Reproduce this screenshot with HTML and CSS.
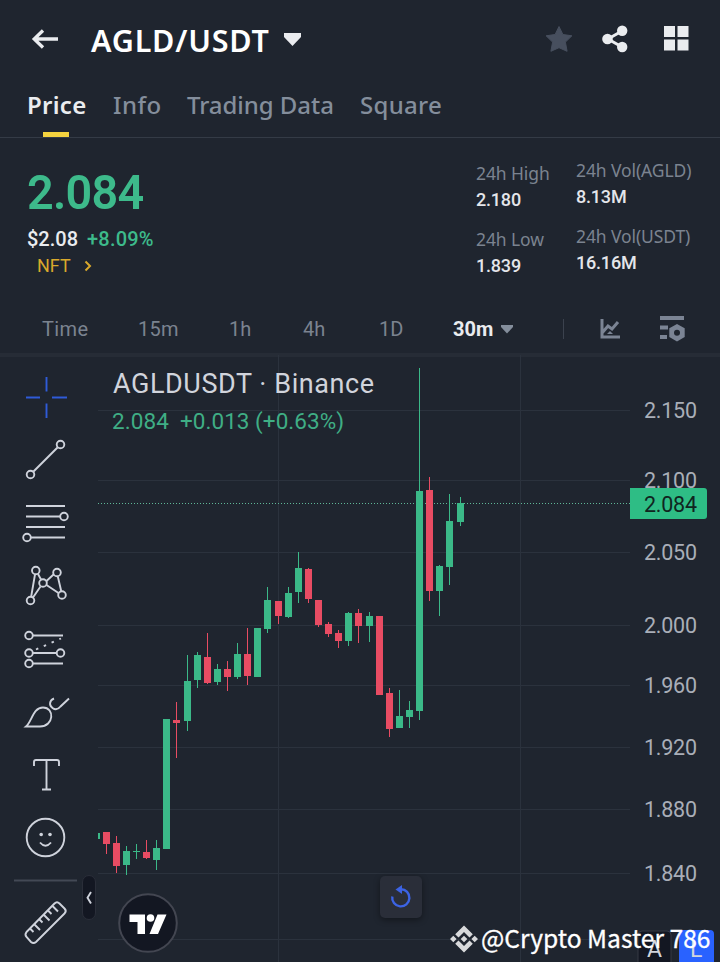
FILE: index.html
```html
<!DOCTYPE html>
<html lang="en">
<head>
<meta charset="utf-8">
<title>AGLD/USDT</title>
<link rel="stylesheet" href="styles.css">
</head>
<body>
<div class="app">
  <header class="header">
    <svg class="back" width="28" height="22" viewBox="0 0 28 22"><path d="M27 11H3M12 2.500L3.200 11l8.800 8.500" fill="none" stroke="#eaecef" stroke-width="3.300"/></svg>
    <h1 class="pair">AGLD/USDT</h1>
    <svg class="pair-caret" width="17" height="14" viewBox="0 0 17 14"><path d="M0 0h17v4L8.500 13 0 4z" fill="#eaecef"/></svg>
    <div class="actions">
      <svg width="28" height="28" viewBox="0 0 28 28"><path d="M14 1.500l3.900 8 9 1.300-6.500 6.300 1.700 9.200-8.100-3.600-8.100 3.600 1.700-9.200L1.100 10.800l9-1.300z" fill="#474f5e" stroke="#474f5e" stroke-linejoin="round"/></svg>
      <svg width="28" height="28" viewBox="0 0 28 28"><path d="M21 6L7 14l14 8" fill="none" stroke="#eaecef" stroke-width="3"/><g fill="#eaecef"><circle cx="21.200" cy="5.800" r="5.200"/><circle cx="6.500" cy="14" r="5.300"/><circle cx="21.200" cy="22" r="5.200"/></g></svg>
      <svg width="25" height="25" viewBox="0 0 25 25"><path d="M0 0h11v11H0zM13.500 0h11v11h-11zM0 13.500h11v11H0zM13.500 13.500h11v11h-11z" fill="#eaecef"/></svg>
    </div>
  </header>
  <nav class="tabs">
    <a class="tab tab-active">Price</a><a class="tab tab-info">Info</a><a class="tab tab-data">Trading Data</a><a class="tab tab-square">Square</a>
  </nav>
  <section class="summary">
    <div class="quote">
      <div class="last">2.084</div>
      <div class="change"><span class="fiat">$2.08</span><span class="pct">+8.09%</span></div>
      <div class="tag"><span>NFT</span><svg width="8" height="12" viewBox="0 0 8 12"><path d="M1.500 1.500L6 6l-4.500 4.500" fill="none" stroke="#d9a92c" stroke-width="2"/></svg></div>
    </div>
    <dl class="stats stats-range">
      <dt>24h High</dt><dd>2.180</dd>
      <dt>24h Low</dt><dd>1.839</dd>
    </dl>
    <dl class="stats stats-volume">
      <dt>24h Vol(AGLD)</dt><dd>8.13M</dd>
      <dt>24h Vol(USDT)</dt><dd>16.16M</dd>
    </dl>
  </section>
  <div class="intervals">
    <span class="iv iv-time">Time</span><span class="iv iv-15">15m</span><span class="iv iv-1h">1h</span><span class="iv iv-4h">4h</span><span class="iv iv-1d">1D</span><span class="iv iv-active">30m</span>
    <svg class="iv-caret" width="12" height="9" viewBox="0 0 12 9"><path d="M0 0h12v2L6 8.500 0 2z" fill="#848e9c"/></svg>
    <i class="iv-sep"></i>
    <svg class="iv-chart" width="20" height="20" viewBox="0 0 20 20"><path d="M2 0v18h18M2 14L8 7l4 3 6-7" fill="none" stroke="#7b8494" stroke-width="3"/><path d="M10 12l3 3H7z" fill="#7b8494"/></svg>
    <svg class="iv-set" width="26" height="26" viewBox="0 0 26 26"><g fill="#7b8494"><path d="M0 0h24v4H0zM0 9.500h8v4H0zM0 19h7v4H0z"/><path fill-rule="evenodd" d="M17 8l7.700 4.300v8.700L17 25.500 9.300 21v-8.700zM17 13.700a3 3 0 1 0 0 6 3 3 0 0 0 0-6z"/></g></svg>
  </div>
  <main class="workspace">
    <aside class="tools">
      <svg viewBox="0 355 98 607" width="98" height="607" fill="none" stroke="#cfd3dc" stroke-width="1.900">
        <path d="M46.500 377v14.500M46.500 403.500V418M26 397.500h14M52 397.500h15" stroke="#2f5bd8"/>
        <path d="M33.500 471.500l24-24"/><circle cx="30.500" cy="474.500" r="3.800"/><circle cx="60.500" cy="444.500" r="3.800"/>
        <path d="M26 506h39M26 516.500h34M26 527h39M31 537.500h34"/><circle cx="64" cy="516.500" r="3.800"/><circle cx="27" cy="537.500" r="3.800"/>
        <path d="M31.200 596.500L35 574.500M33 597.500l7.500-11M46.500 581l7-6.500M57.800 576.500l3.400 14.500M46.500 585l12 8M38 574l3 5.500"/><circle cx="35.800" cy="570.500" r="3.800"/><circle cx="57" cy="572.500" r="3.800"/><circle cx="43" cy="583" r="3.800"/><circle cx="30.500" cy="600.500" r="3.800"/><circle cx="62" cy="595" r="3.800"/>
        <path d="M33 635.500h30M33 653h23M33 663.500h30"/><path d="M36 649.500l25-11" stroke-dasharray="2.500 6"/><circle cx="29" cy="635.500" r="3.800"/><circle cx="29" cy="653" r="3.800"/><circle cx="60.500" cy="653" r="3.800"/><circle cx="29" cy="663.500" r="3.800"/>
        <path d="M26 726.500c6-5 7-19 17-19 12 0 11 19-3 19zM54 698.500c-5 2-5 7-1.500 9.500 3 2.300 6 1 8-1.500l8.500-8"/>
        <path d="M34 766v-4q0-2 2-2h21q2 0 2 2v4M46.500 760v29.500M42 789.500h9"/>
        <circle cx="45.500" cy="837.500" r="18.800"/><path d="M40 842.500q5.500 6.500 11 0"/><circle cx="41.200" cy="834.500" r="1.800" fill="#cfd3dc" stroke="none"/><circle cx="50" cy="834.500" r="1.800" fill="#cfd3dc" stroke="none"/>
        <path d="M14 880.500h63" stroke="#434955"/>
        <path d="M26.500 932l28-28.500q2.500-2.500 5 0l5 5q2.500 2.500 0 5L36 942q-2.500 2-5 0l-4.500-5q-2-2.500 0-5zM30.500 929l3 3M34.500 924.500l5.500 5.500M39.500 919.500l3 3M44 915l5.500 5.500M48.500 911l3 3M53 906.500l5 5"/>
        <rect x="82.500" y="875.500" width="13" height="44" rx="6.500" fill="#131722" stroke="#2a2e39" stroke-width="1"/>
        <path d="M91 892l-3.500 5.700 3.500 5.800"/>
      </svg>
    </aside>
    <div class="chart">
      <svg id="plot" viewBox="98 355 622 607" width="622" height="607">
        <g id="grid" stroke="#2b323d"></g>
        <path d="M98 503.500H630" stroke="#5fb798" stroke-width="1" stroke-dasharray="1 2"/>
        <g id="candles"></g>
        <text class="symbol" x="113" y="392.500" textLength="261">AGLDUSDT · Binance</text>
        <text class="symbol-value" x="112" y="429" textLength="57">2.084</text>
        <text class="symbol-value" x="180" y="429" textLength="164">+0.013 (+0.63%)</text>
        <g id="axis" class="axis"></g>
        <path d="M630 488h74q3 0 3 3v25q0 3-3 3h-74z" fill="#2ebd85"/>
        <text class="axis-current" x="644" y="511.500" textLength="53">2.084</text>
        <circle cx="148" cy="923" r="28.800" fill="#131722" stroke="#434651" stroke-width="2"/>
        <path d="M129.500 914.500h15.500v19.500h-7.500v-12h-8z M157.500 914.500h9l-8.500 19.500h-8.500z" fill="#fff"/><circle cx="150.500" cy="918" r="3.800" fill="#fff"/>
        <rect class="reset" x="380" y="876" width="42" height="42" rx="5" fill="#2a2e39"/>
        <path d="M392.300 896.500a8.600 8.600 0 1 0 8.600-7.300h-2" fill="none" stroke="#3c63e4" stroke-width="2.400"/><path d="M395.500 889.500l6.500-4.500v9z" fill="#3c63e4"/>
        <rect x="638" y="931" width="33" height="36" rx="4" fill="#131722" stroke="#363a45"/>
        <rect x="679" y="930" width="35" height="38" rx="4" fill="#2962ff"/>
        <text class="scale" x="647" y="957">A</text><text class="scale" x="690" y="957">L</text>
      </svg>
      <div class="watermark">
        <svg width="28" height="28" viewBox="0 0 28 28"><g fill="#d8d9db"><path d="M5.200 9.200L14 .4l8.800 8.800-3.300 3.300L14 7l-5.500 5.500zM5.200 18.800l3.300-3.300L14 21l5.500-5.500 3.300 3.300-8.800 8.800z"/><path d="M3.300 10.700L6.600 14l-3.300 3.300L0 14zM24.700 10.700L28 14l-3.300 3.300-3.300-3.300zM14 10.700l3.300 3.300-3.300 3.300-3.300-3.300z"/></g></svg>
        <span>@Crypto Master 786</span>
      </div>
    </div>
  </main>
</div>
<script src="chart.js"></script>
</body>
</html>
```
FILE: chart.js
```js
const NS = 'http://www.w3.org/2000/svg';
function add(parent, name, attrs, text) {
  const el = document.createElementNS(NS, name);
  for (const key in attrs) el.setAttribute(key, attrs[key]);
  if (text) el.textContent = text;
  document.getElementById(parent).appendChild(el);
}

// centre x, body top, body bottom, wick top, wick bottom, direction
const candles = [
  [106.5,832,844,832,854,'d'],[116.5,843,866,836,873,'d'],[126.5,851,865,846,875,'u'],
  [136.5,851,852,844,859,'u'],[146.5,852,858,840,859,'d'],[156.5,848,860,840,870,'u'],
  [166.5,719,849,719,849,'u'],[176.5,720,723,702,758,'d'],[187.5,681,721,655,731,'u'],
  [197.5,655,680,652,688,'u'],[207.5,657,683,633,684,'d'],[217.5,669,682,664,685,'u'],
  [227.5,669,677,661,691,'d'],[237.5,654,677,643,679,'u'],[247.5,654,676,628,685,'d'],
  [257.5,628,677,628,677,'u'],[267.5,600,629,587,633,'u'],[278.5,601,616,601,624,'d'],
  [288.5,593,617,587,618,'u'],[298.5,568,592,552,603,'u'],[308.5,569,599,568,603,'d'],
  [318.5,600,625,600,627,'d'],[328.5,624,634,622,637,'d'],[338.5,633,641,630,648,'d'],
  [348.5,613,641,612,646,'u'],[358.5,613,626,609,643,'d'],[369.5,616,626,612,642,'u'],
  [379.5,616,695,616,695,'d'],[389.5,693,729,688,737,'d'],[399.5,716,728,690,728,'u'],
  [409.5,710,717,701,728,'u'],[419.5,491,711,368,720,'u'],[429.5,490,591,477,601,'d'],
  [439.5,566,591,565,616,'u'],[449.5,521,567,494,585,'u'],[460.5,503,522,497,526,'u']
];
const levels = [[410.5,'2.150'],[480.5,'2.100'],[552.5,'2.050'],[625.5,'2.000'],
  [685.5,'1.960'],[747.5,'1.920'],[809.5,'1.880'],[873.5,'1.840'],[939.5,'']];

for (const [y, label] of levels) {
  add('grid', 'path', { d: `M98 ${y}H630` });
  if (label) add('axis', 'text', { x: 644, y: y + 7.8, textLength: 53 }, label);
}
for (const x of [278.5, 520.5]) add('grid', 'path', { d: `M${x} 355V962` });

add('candles', 'rect', { x: 98, y: 833, width: 2, height: 6, class: 'u' });
for (const [x, top, bottom, high, low, dir] of candles) {
  add('candles', 'rect', { x: x - 0.5, y: high, width: 1, height: low - high, class: dir });
  add('candles', 'rect', { x: x - 3.5, y: top, width: 7, height: bottom - top, class: dir });
}
```
FILE: styles.css
```css
* { box-sizing: border-box; }
body { margin: 0; background: #1f252f; color: #eaecef; font-family: "Noto Sans", sans-serif; }
svg { display: block; flex: none; }
.app { width: 720px; height: 962px; overflow: hidden; display: flex; flex-direction: column; }

.header { height: 78px; display: flex; align-items: center; padding: 0 31px 1px; flex: none; }
.pair { margin: 2px 0 0 32px; width: 180px; font-size: 30.500px; font-weight: 600; line-height: 40px; letter-spacing: 0.8px; color: #fff; white-space: nowrap; }
.pair-caret { margin: 2px 0 0 13px; }
.actions { margin-left: auto; display: flex; align-items: center; gap: 28px; }
.actions svg:last-child { margin-left: 7px; }

.tabs { height: 60px; flex: none; display: flex; border-bottom: 1px solid #343b46; padding-left: 27px; white-space: nowrap; }
.tab { font-size: 24px; line-height: 32px; padding-top: 11px; font-weight: 500; color: #848e9c; }
.tab-active { width: 86px; letter-spacing: 0.3px; color: #eaecef; font-weight: 600; display: flex; flex-direction: column; justify-content: space-between; }
.tab-active::after { content: ""; width: 26px; height: 5px; margin-left: 16px; background: #f5d33f; }
.tab-info { width: 48px; letter-spacing: 0.5px; }
.tab-data { margin-left: 26px; width: 147px; letter-spacing: -0.050px; }
.tab-square { margin-left: 26px; letter-spacing: 0.300px; }

.summary { height: 162px; flex: none; display: flex; padding-left: 27px; font-family: Roboto, sans-serif; }
.quote { width: 449px; }
.last { margin-top: 26px; height: 58px; line-height: 58px; font-size: 49px; font-weight: 600; color: #3dba8b; transform: scaleX(.955); transform-origin: left; letter-spacing: -0.800px; }
.change { display: flex; gap: 9px; margin-top: 4px; font-size: 20px; line-height: 26px; font-weight: 500; }
.pct { color: #3dba8b; letter-spacing: 0.2px; }
.tag { display: flex; align-items: center; gap: 13px; padding-left: 10px; font-size: 18px; line-height: 28px; color: #d9a92c; }
.stats { margin: 20px 0 0; white-space: nowrap; }
.stats-range { width: 100px; margin-top: 23px; }
.stats dt { font-family: "Noto Sans", sans-serif; font-size: 17.500px; line-height: 24px; height: 24px; color: #7b8390; letter-spacing: -0.100px; }
.stats dd { margin: 0 0 13px; font-size: 18px; line-height: 29px; font-weight: 500; color: #e4e6ea; letter-spacing: -0.200px; }

.intervals { height: 55px; flex: none; display: flex; align-items: center; padding: 5px 0 0 42px; border-bottom: 2px solid #262c36; box-shadow: 0 2px #262c36; font-family: Roboto, sans-serif; font-size: 20px; line-height: 26px; color: #7b8390; }
.iv { white-space: nowrap; }
.iv-time { width: 96px; letter-spacing: 0.400px; }
.iv-15 { width: 91px; letter-spacing: 0.300px; }
.iv-1h { width: 74px; }
.iv-4h { width: 76px; }
.iv-1d { width: 74px; }
.iv-active { width: 48px; color: #eaecef; font-weight: 700; }
.iv-sep { width: 1px; height: 20px; background: #3b424e; margin: 0 36px 0 50px; }
.iv-set { margin-left: 40px; }

.workspace { flex: none; height: 607px; display: flex; }
.tools { width: 98px; }
.chart { width: 622px; position: relative; font-family: Roboto, sans-serif; }
.u { fill: #3bb988; }
.d { fill: #e84c63; }
.symbol { font-size: 27px; fill: #d1d4dc; }
.symbol-value { font-size: 22.500px; fill: #3fae85; }
.axis { font-size: 21.500px; fill: #a9aeb8; }
.axis-current { font-size: 21.500px; fill: #10251f; }
.scale { font-size: 23px; fill: #d1d4dc; }
.reset { filter: drop-shadow(0 2px 3px rgba(0, 0, 0, .4)); }
.watermark { position: absolute; left: 352px; bottom: 7px; display: flex; align-items: center; gap: 3px; font-family: "Noto Sans CJK SC", sans-serif; font-size: 24.600px; line-height: 36px; color: #fff; white-space: nowrap; -webkit-text-stroke: 0.300px #fff; }
.watermark span { margin-top: -4px; }
```
